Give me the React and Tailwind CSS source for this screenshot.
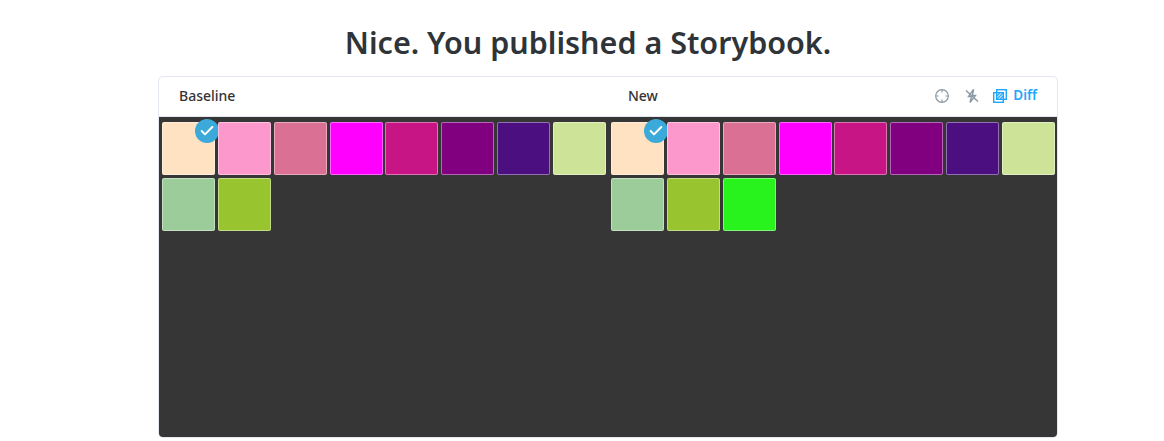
import { Check } from 'lucide-react';

const baseline = ['#ffe2c2', '#fd98cc', '#da7093', '#ff00ff', '#c71585', '#800080', '#4b0f80', '#cde398', '#9ccc99', '#98c52f'];
const next = [...baseline, '#28f31c'];

function Tile({ color, checked }) {
	return (
		<div className="relative h-[53px] w-[53px] rounded-[2px] border border-white/40" style={{ backgroundColor: color }}>
			{checked && (
				<div className="absolute left-[32px] top-[-4px] flex h-6 w-6 items-center justify-center rounded-full bg-[#3ba9d9]">
					<Check className="h-4 w-4 text-white" strokeWidth={3} />
				</div>
			)}
		</div>
	);
}

function Panel({ colors }) {
	return (
		<div className="w-[449px] pl-[3px] pt-[5px]">
			<div className="grid grid-cols-[repeat(8,53px)] gap-x-[2.86px] gap-y-[3px]">
				{colors.map((c, i) => (
					<Tile key={i} color={c} checked={i === 0} />
				))}
			</div>
		</div>
	);
}

export default function App() {
	return (
		<div className="h-[441px] overflow-hidden bg-white pl-[158px] font-['Noto_Sans',sans-serif] text-[#333]">
			<h1 className="w-[860px] pt-[21px] text-center text-[30.5px] font-semibold leading-[42px] text-[#2e3438]">Nice. You published a Storybook.</h1>
			<div className="mt-[13px] w-[900px] overflow-hidden rounded-[5px] border border-[#e2e8ee]">
				<div className="flex h-[40px] items-center border-b border-[#e2e8ee] pb-[2px] text-[14px] font-medium text-[#333]">
					<div className="w-[449px] pl-[20px]">Baseline</div>
					<div className="flex flex-1 items-center justify-between pl-[20px] pr-[20px]">
						<span>New</span>
						<div className="flex items-center">
							<svg width="14" height="14" viewBox="0 0 14 14" fill="none" stroke="#8a99a6" strokeWidth="1.2">
								<circle cx="7" cy="7" r="6.3" />
								<path d="M7 0.500v3M7 10.500v3M0.500 7h3M10.500 7h3" />
							</svg>
							<svg className="ml-[16px]" width="14" height="14" viewBox="0 0 14 14" fill="none" stroke="#8a99a6" strokeWidth="1.400">
								<path d="M8.500 0.500 3.500 7.500h3L5 13.500 10.500 6.500H7.500z" />
								<path d="M1 1.500 13 12.500" />
							</svg>
							<svg className="ml-[14px]" width="14" height="14" viewBox="0 0 14 14" fill="none" stroke="#1ea7fd" strokeWidth="1.400">
								<rect x="0.700" y="3.700" width="9.600" height="9.600" />
								<rect x="3.700" y="0.700" width="9.600" height="9.600" />
								<path d="M4 7 7 4M4 10 10 4M7 10 10 7" strokeWidth="1.200" />
							</svg>
							<span className="ml-[6px] text-[13.5px] font-semibold text-[#1ea7fd]">Diff</span>
						</div>
					</div>
				</div>
				<div className="flex h-[320px] bg-[#363636]">
					<Panel colors={baseline} />
					<Panel colors={next} />
				</div>
			</div>
		</div>
	);
}
